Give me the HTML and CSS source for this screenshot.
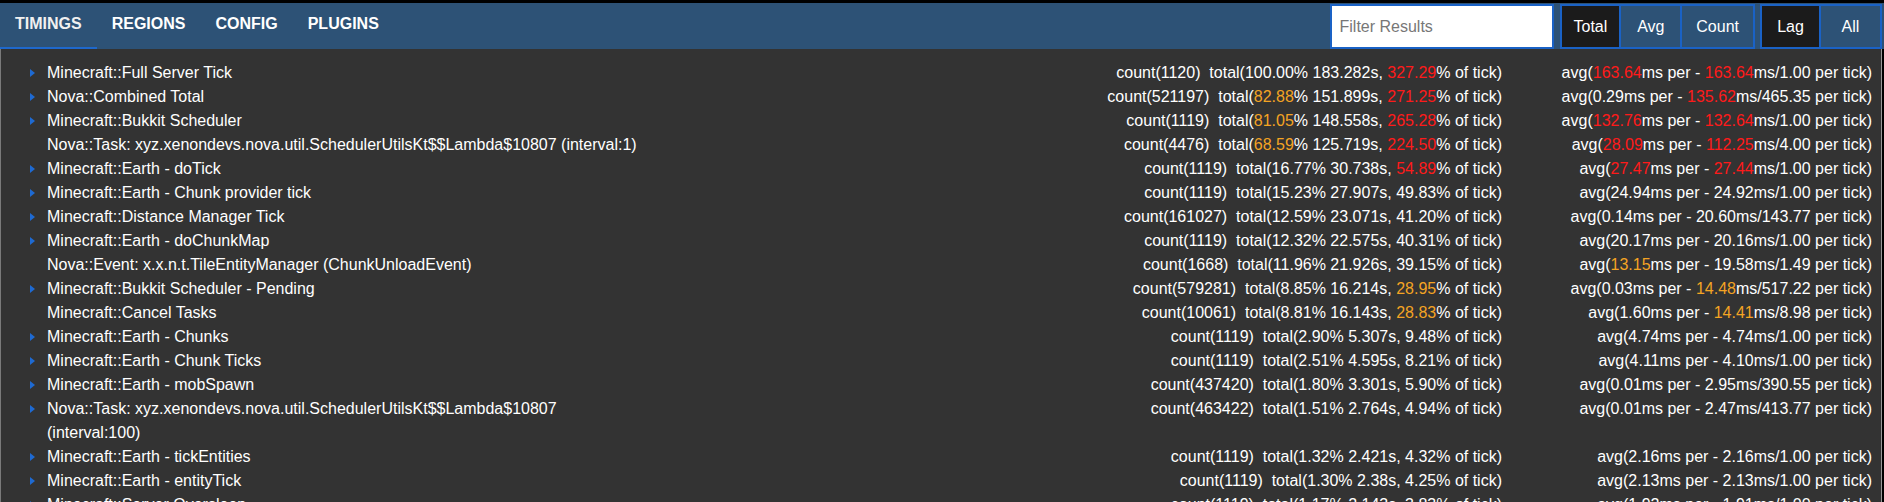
FILE: index.html
```html
<!DOCTYPE html>
<html lang="en">
<head>
<meta charset="utf-8">
<title>Timings</title>
<link rel="stylesheet" href="styles.css">
</head>
<body>
<div class="page">
  <nav class="nav">
    <div class="tabs">
      <a class="tab active">TIMINGS</a>
      <a class="tab">REGIONS</a>
      <a class="tab">CONFIG</a>
      <a class="tab">PLUGINS</a>
    </div>
    <div class="controls">
      <input class="filter" type="text" placeholder="Filter Results">
      <div class="group">
        <button class="btn on">Total</button>
        <button class="btn">Avg</button>
        <button class="btn wide">Count</button>
      </div>
      <div class="group">
        <button class="btn on">Lag</button>
        <button class="btn">All</button>
      </div>
    </div>
  </nav>
  <main class="content">
    <div class="row"><span class="tw"></span><span class="name">Minecraft::Full Server Tick</span><span class="tot">count(1120)&nbsp; total(100.00% 183.282s, <span class="r">327.29</span>% of tick)</span><span class="avg">avg(<span class="r">163.64</span>ms per - <span class="r">163.64</span>ms/1.00 per tick)</span></div>
    <div class="row"><span class="tw"></span><span class="name">Nova::Combined Total</span><span class="tot">count(521197)&nbsp; total(<span class="o">82.88</span>% 151.899s, <span class="r">271.25</span>% of tick)</span><span class="avg">avg(0.29ms per - <span class="r">135.62</span>ms/465.35 per tick)</span></div>
    <div class="row"><span class="tw"></span><span class="name">Minecraft::Bukkit Scheduler</span><span class="tot">count(1119)&nbsp; total(<span class="o">81.05</span>% 148.558s, <span class="r">265.28</span>% of tick)</span><span class="avg">avg(<span class="r">132.76</span>ms per - <span class="r">132.64</span>ms/1.00 per tick)</span></div>
    <div class="row"><span class="tw none"></span><span class="name">Nova::Task: xyz.xenondevs.nova.util.SchedulerUtilsKt$$Lambda$10807 (interval:1)</span><span class="tot">count(4476)&nbsp; total(<span class="o">68.59</span>% 125.719s, <span class="r">224.50</span>% of tick)</span><span class="avg">avg(<span class="r">28.09</span>ms per - <span class="r">112.25</span>ms/4.00 per tick)</span></div>
    <div class="row"><span class="tw"></span><span class="name">Minecraft::Earth - doTick</span><span class="tot">count(1119)&nbsp; total(16.77% 30.738s, <span class="r">54.89</span>% of tick)</span><span class="avg">avg(<span class="r">27.47</span>ms per - <span class="r">27.44</span>ms/1.00 per tick)</span></div>
    <div class="row"><span class="tw"></span><span class="name">Minecraft::Earth - Chunk provider tick</span><span class="tot">count(1119)&nbsp; total(15.23% 27.907s, 49.83% of tick)</span><span class="avg">avg(24.94ms per - 24.92ms/1.00 per tick)</span></div>
    <div class="row"><span class="tw"></span><span class="name">Minecraft::Distance Manager Tick</span><span class="tot">count(161027)&nbsp; total(12.59% 23.071s, 41.20% of tick)</span><span class="avg">avg(0.14ms per - 20.60ms/143.77 per tick)</span></div>
    <div class="row"><span class="tw"></span><span class="name">Minecraft::Earth - doChunkMap</span><span class="tot">count(1119)&nbsp; total(12.32% 22.575s, 40.31% of tick)</span><span class="avg">avg(20.17ms per - 20.16ms/1.00 per tick)</span></div>
    <div class="row"><span class="tw none"></span><span class="name">Nova::Event: x.x.n.t.TileEntityManager (ChunkUnloadEvent)</span><span class="tot">count(1668)&nbsp; total(11.96% 21.926s, 39.15% of tick)</span><span class="avg">avg(<span class="o">13.15</span>ms per - 19.58ms/1.49 per tick)</span></div>
    <div class="row"><span class="tw"></span><span class="name">Minecraft::Bukkit Scheduler - Pending</span><span class="tot">count(579281)&nbsp; total(8.85% 16.214s, <span class="o">28.95</span>% of tick)</span><span class="avg">avg(0.03ms per - <span class="o">14.48</span>ms/517.22 per tick)</span></div>
    <div class="row"><span class="tw none"></span><span class="name">Minecraft::Cancel Tasks</span><span class="tot">count(10061)&nbsp; total(8.81% 16.143s, <span class="o">28.83</span>% of tick)</span><span class="avg">avg(1.60ms per - <span class="o">14.41</span>ms/8.98 per tick)</span></div>
    <div class="row"><span class="tw"></span><span class="name">Minecraft::Earth - Chunks</span><span class="tot">count(1119)&nbsp; total(2.90% 5.307s, 9.48% of tick)</span><span class="avg">avg(4.74ms per - 4.74ms/1.00 per tick)</span></div>
    <div class="row"><span class="tw"></span><span class="name">Minecraft::Earth - Chunk Ticks</span><span class="tot">count(1119)&nbsp; total(2.51% 4.595s, 8.21% of tick)</span><span class="avg">avg(4.11ms per - 4.10ms/1.00 per tick)</span></div>
    <div class="row"><span class="tw"></span><span class="name">Minecraft::Earth - mobSpawn</span><span class="tot">count(437420)&nbsp; total(1.80% 3.301s, 5.90% of tick)</span><span class="avg">avg(0.01ms per - 2.95ms/390.55 per tick)</span></div>
    <div class="row"><span class="tw"></span><span class="name">Nova::Task: xyz.xenondevs.nova.util.SchedulerUtilsKt$$Lambda$10807 (interval:100)</span><span class="tot">count(463422)&nbsp; total(1.51% 2.764s, 4.94% of tick)</span><span class="avg">avg(0.01ms per - 2.47ms/413.77 per tick)</span></div>
    <div class="row"><span class="tw"></span><span class="name">Minecraft::Earth - tickEntities</span><span class="tot">count(1119)&nbsp; total(1.32% 2.421s, 4.32% of tick)</span><span class="avg">avg(2.16ms per - 2.16ms/1.00 per tick)</span></div>
    <div class="row"><span class="tw"></span><span class="name">Minecraft::Earth - entityTick</span><span class="tot">count(1119)&nbsp; total(1.30% 2.38s, 4.25% of tick)</span><span class="avg">avg(2.13ms per - 2.13ms/1.00 per tick)</span></div>
    <div class="row"><span class="tw"></span><span class="name">Minecraft::Server Oversleep</span><span class="tot">count(1119)&nbsp; total(1.17% 2.143s, 3.83% of tick)</span><span class="avg">avg(1.92ms per - 1.91ms/1.00 per tick)</span></div>
  </main>
</div>
</body>
</html>
```
FILE: styles.css
```css
html, body {
  margin: 0;
  padding: 0;
  background: #000;
  height: 100%;
  overflow: hidden;
}
.page {
  padding-top: 3px;
  font-family: "Liberation Sans", Arial, sans-serif;
  font-size: 16px;
  color: #fff;
}
.nav {
  display: flex;
  justify-content: space-between;
  height: 46px;
  background: #2d5276;
  padding-right: 2px;
}
.tabs {
  display: flex;
}
.tab {
  display: block;
  padding: 12px 15px 0;
  height: 32px;
  line-height: 18px;
  font-weight: bold;
  color: #fff;
  border-bottom: 2px solid transparent;
}
.tab.active {
  color: #f0f0f0;
  border-bottom-color: #1e68cc;
}
.controls {
  display: flex;
  margin-top: 1px;
  height: 45px;
}
.filter {
  box-sizing: border-box;
  width: 224px;
  height: 45px;
  margin: 0 6px 0 0;
  border: 2px solid #1a62c6;
  padding: 0 8px;
  font-family: "Liberation Sans", Arial, sans-serif;
  font-size: 16px;
  color: #222;
  background: #fff;
  outline: none;
}
.filter::placeholder {
  color: #777;
}
.group {
  display: flex;
  margin-right: 5px;
}
.group:last-child {
  margin-right: 0;
}
.btn {
  box-sizing: border-box;
  min-width: 61px;
  height: 45px;
  padding: 0 12px;
  margin: 0;
  border: 2px solid #1a62c6;
  background: #2d5276;
  color: #fff;
  font-family: "Liberation Sans", Arial, sans-serif;
  font-size: 16px;
}
.btn.wide {
  padding: 0 14px;
}
.btn + .btn {
  border-left: 0;
}
.btn.on {
  background: #1b1b1b;
}
.content {
  background: #333;
  border-left: 1px solid #7a7a7a;
  border-right: 1px solid #9a9a9a;
  margin-right: 2px;
  padding-top: 12px;
  height: 600px;
}
.row {
  display: flex;
  align-items: flex-start;
  line-height: 24px;
  padding: 0 9px 0 29px;
}
.tw {
  flex: 0 0 auto;
  width: 0;
  height: 0;
  margin: 8px 12px 0 0;
  border-left: 5px solid #1e6ad2;
  border-top: 4px solid transparent;
  border-bottom: 4px solid transparent;
}
.tw.none {
  border-left-color: transparent;
}
.name {
  flex: 0 0 598px;
}
.tot {
  margin-left: auto;
  white-space: nowrap;
  text-align: right;
}
.avg {
  flex: 0 0 370px;
  white-space: nowrap;
  text-align: right;
}
.r {
  color: #ff1a1a;
}
.o {
  color: #f4a423;
}
```
